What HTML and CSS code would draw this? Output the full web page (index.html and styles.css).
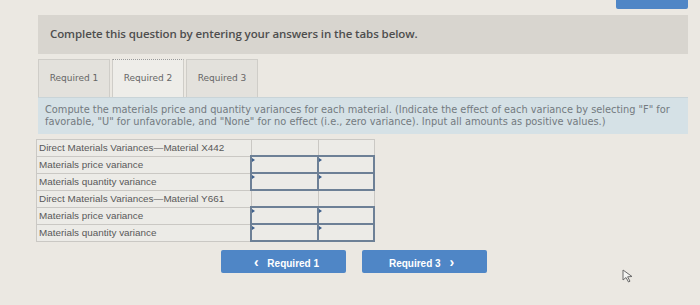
FILE: index.html
```html
<!DOCTYPE html>
<html lang="en">
<head>
    <meta charset="UTF-8">
    <title>Required 2</title>
    <link rel="stylesheet" href="styles.css">
</head>
<body>
<div class="topbar">
    <div class="top-btn"></div>
</div>

<div class="page">
    <div class="banner">Complete this question by entering your answers in the tabs below.</div>

    <div class="tabs">
        <div class="tab">Required 1</div>
        <div class="tab active">Required 2</div>
        <div class="tab">Required 3</div>
    </div>

    <div class="instructions">
        Compute the materials price and quantity variances for each material. (Indicate the effect of each variance by selecting "F" for<br>
        favorable, "U" for unfavorable, and "None" for no effect (i.e., zero variance). Input all amounts as positive values.)
    </div>

    <table class="grid">
        <tr class="head">
            <td class="label">Direct Materials Variances—Material X442</td>
            <td></td>
            <td></td>
        </tr>
        <tr>
            <td class="label">Materials price variance</td>
            <td class="field"><span class="mark"></span></td>
            <td class="field"><span class="mark"></span></td>
        </tr>
        <tr>
            <td class="label">Materials quantity variance</td>
            <td class="field"><span class="mark"></span></td>
            <td class="field"><span class="mark"></span></td>
        </tr>
        <tr class="head">
            <td class="label">Direct Materials Variances—Material Y661</td>
            <td></td>
            <td></td>
        </tr>
        <tr>
            <td class="label">Materials price variance</td>
            <td class="field"><span class="mark"></span></td>
            <td class="field"><span class="mark"></span></td>
        </tr>
        <tr>
            <td class="label">Materials quantity variance</td>
            <td class="field"><span class="mark"></span></td>
            <td class="field"><span class="mark"></span></td>
        </tr>
    </table>

    <div class="nav">
        <button class="nav-btn"><span class="chev">&lsaquo;</span> Required 1</button>
        <button class="nav-btn">Required 3 <span class="chev">&rsaquo;</span></button>
        <svg class="cursor" width="12" height="14" viewBox="0 0 12 14">
            <path d="M1 1 L1 11 L4 8.5 L6.5 13 L8 12.2 L5.6 7.8 L10 7.5 Z" fill="#f4f4f2" stroke="#6b6b6b" stroke-width="1"/>
        </svg>
    </div>
</div>
</body>
</html>
```

FILE: styles.css
```css
body {
    margin: 0;
    background-color: #ebe8e2;
    font-family: "Liberation Sans", Arial, sans-serif;
    color: #555;
    height: 305px;
    overflow: hidden;
}
.topbar {
    height: 15px;
    display: flex;
    justify-content: flex-end;
    padding-right: 12px;
}
.top-btn {
    width: 72px;
    height: 9px;
    background: #4f86c6;
    border-radius: 0 0 2px 2px;
}
.page {
    padding: 0 12px 0 38px;
}
.banner {
    height: 37px;
    padding: 0 0 2px 12px;
    display: flex;
    align-items: center;
    background: #d8d5cf;
    font-family: "Open Sans", sans-serif;
    font-weight: 600;
    font-size: 11.5px;
    color: #4e4e4e;
    letter-spacing: -0.1px;
}
.tabs {
    display: flex;
    gap: 2px;
    margin-top: 5px;
}
.tab {
    width: 70px;
    height: 37px;
    line-height: 37px;
    text-align: center;
    font-family: "DejaVu Sans", Verdana, sans-serif;
    font-size: 9px;
    color: #666;
    background: #e3e1dc;
    border: 1px solid #cfcdc8;
    border-bottom: none;
}
.tab.active {
    background: #eeede9;
    border-top: 1px dotted #999;
}
.instructions {
    background: #d5e1e6;
    border-top: 1px solid #c9d4d8;
    padding: 6px 6px 7px 7px;
    font-family: "DejaVu Sans", Verdana, sans-serif;
    font-size: 9.8px;
    line-height: 12px;
    color: #737a80;
    height: 23px;
    white-space: nowrap;
}
.grid {
    border-collapse: collapse;
    margin: 5px 0 0 -2px;
    font-size: 9.9px;
    color: #595959;
}
.grid td {
    height: 15px;
    padding: 0 2px;
    border: 1px solid #cac8c4;
    background: #ecebe7;
}
.grid td.label {
    width: 209px;
}
.grid td:not(.label) {
    width: 61px;
}
.grid td:nth-child(3) {
    width: 50px;
}
.grid td.field {
    border: 2px solid #6d8096;
    position: relative;
}
.mark {
    position: absolute;
    left: 0;
    top: 1px;
    width: 0;
    height: 0;
    border-top: 2px solid transparent;
    border-bottom: 2px solid transparent;
    border-left: 3px solid #3d5f8c;
}
.nav {
    display: flex;
    gap: 16px;
    margin-top: 8px;
    padding-left: 183px;
    position: relative;
}
.nav-btn {
    width: 125px;
    height: 23px;
    background: #4f86c6;
    color: #fff;
    border: none;
    border-radius: 2px;
    font-family: "Liberation Sans", Arial, sans-serif;
    font-weight: bold;
    font-size: 10px;
    cursor: pointer;
}
.chev {
    font-size: 14px;
    margin: 0 6px;
}
.cursor {
    position: absolute;
    left: 584px;
    top: 19px;
}
```
